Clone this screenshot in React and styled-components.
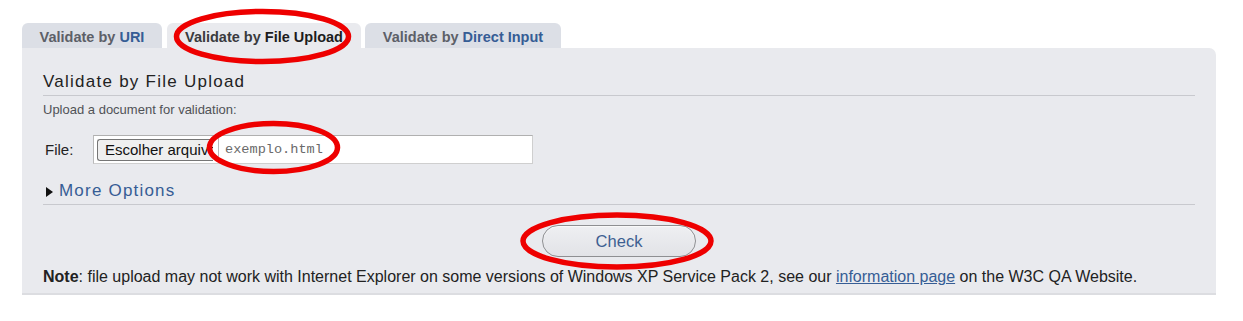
import React from "react";
import styled, { createGlobalStyle } from "styled-components";

const Global = createGlobalStyle`
  html, body { margin: 0; padding: 0; background: #fff; }
  body { font-family: "Liberation Sans", Arial, sans-serif; color: #222; }
`;

const Page = styled.div`
  position: relative;
  width: 1243px;
  height: 321px;
  padding: 23px 27px 0 22px;
  box-sizing: border-box;
`;

const Tabs = styled.div`
  display: flex;
  align-items: flex-end;
  gap: 4px;
`;

const Tab = styled.div`
  height: 25px;
  width: ${(p) => p.$w}px;
  margin-left: ${(p) => p.$ml || 0}px;
  box-sizing: border-box;
  padding-top: 4px;
  line-height: 21px;
  text-align: center;
  white-space: nowrap;
  border-radius: 6px 6px 0 0;
  background: ${(p) => (p.$active ? "#e9eaee" : "#dcdfe6")};
  color: ${(p) => (p.$active ? "#3a3b3e" : "#5d6068")};
  font-size: 14.5px;
  font-weight: bold;
  & b {
    color: ${(p) => (p.$active ? "#1c1c1c" : "#365d95")};
  }
`;

const Panel = styled.div`
  background: #e9eaee;
  border-radius: 0 7px 0 0;
  padding: 24px 21px 7px 21px;
  border-bottom: 2px solid #dcdde1;
`;

const Heading = styled.h2`
  margin: 0;
  font-size: 17px;
  font-weight: normal;
  letter-spacing: 1.25px;
  color: #222;
  line-height: 20px;
  padding-bottom: 3px;
  border-bottom: 1px solid #c8c9ce;
`;

const Hint = styled.p`
  margin: 6px 0 0;
  font-size: 13px;
  color: #505256;
  line-height: 15px;
`;

const FileRow = styled.div`
  display: flex;
  align-items: center;
  margin-top: 18px;
  padding-left: 2px;
  font-size: 15px;
`;

const Label = styled.span`
  width: 48px;
  color: #222;
`;

const FileBox = styled.div`
  width: 440px;
  height: 29px;
  box-sizing: border-box;
  background: #fff;
  border: 1px solid #cfcfcf;
  border-top-color: #b0b0b0;
  border-left-color: #bababa;
  display: flex;
  align-items: center;
  padding-left: 3px;
`;

const ChooseButton = styled.div`
  width: 116px;
  height: 22px;
  box-sizing: border-box;
  background: #efefef;
  border: 1px solid #767676;
  border-right: none;
  border-radius: 3px 0 0 3px;
  font-size: 15px;
  line-height: 20px;
  padding-left: 7px;
  white-space: nowrap;
  overflow: hidden;
  color: #111;
`;

const FileName = styled.div`
  margin-left: 5px;
  height: 25px;
  flex: 1;
  border-left: 1px solid #b8b8b8;
  display: flex;
  align-items: center;
  padding-left: 6px;
  font-family: "Liberation Mono", "Courier New", monospace;
  font-size: 13.6px;
  color: #6a6a6a;
`;

const MoreOptions = styled.div`
  margin-top: 17px;
  padding-left: 3px;
  display: flex;
  align-items: center;
  gap: 6px;
  font-size: 17px;
  letter-spacing: 1.2px;
  color: #365d95;
  line-height: 20px;
  padding-bottom: 3px;
  border-bottom: 1px solid #c8c9ce;
`;

const Arrow = styled.span`
  width: 0;
  height: 0;
  margin-top: 1px;
  border-top: 5.5px solid transparent;
  border-bottom: 5.5px solid transparent;
  border-left: 7px solid #111;
`;

const Actions = styled.div`
  display: flex;
  justify-content: center;
  margin-top: 20px;
`;

const CheckButton = styled.button`
  width: 154px;
  height: 32px;
  border-radius: 16px;
  border: 1px solid #8e8f92;
  background: linear-gradient(#eeeff2, #e2e3e7);
  box-shadow: inset 0 1px 1px #fafafa;
  color: #3d5f92;
  font-family: "Liberation Sans", Arial, sans-serif;
  font-size: 16.5px;
  padding: 0;
`;

const Note = styled.p`
  margin: 11px 0 0;
  font-size: 16px;
  color: #222;
  line-height: 18px;
  & a {
    color: #365d95;
    text-decoration: underline;
  }
`;

const Marks = styled.svg`
  position: absolute;
  left: 0;
  top: 0;
  pointer-events: none;
`;

export default function App() {
  return (
    <>
      <Global />
      <Page>
        <Tabs>
          <Tab $w={140}>
            Validate by <b>URI</b>
          </Tab>
          <Tab $w={194} $ml={1} $active>
            Validate by <b>File Upload</b>
          </Tab>
          <Tab $w={196}>
            Validate by <b>Direct Input</b>
          </Tab>
        </Tabs>
        <Panel>
          <Heading>Validate by File Upload</Heading>
          <Hint>Upload a document for validation:</Hint>
          <FileRow>
            <Label>File:</Label>
            <FileBox>
              <ChooseButton>Escolher arquivo</ChooseButton>
              <FileName>exemplo.html</FileName>
            </FileBox>
          </FileRow>
          <MoreOptions>
            <Arrow />
            More Options
          </MoreOptions>
          <Actions>
            <CheckButton>Check</CheckButton>
          </Actions>
          <Note>
            <b>Note</b>: file upload may not work with Internet Explorer on some
            versions of Windows XP Service Pack 2, see our{" "}
            <a href="#">information page</a> on the W3C QA Website.
          </Note>
        </Panel>
        <Marks width="1243" height="321" viewBox="0 0 1243 321">
          <g fill="none" stroke="#ee0000" strokeWidth="5.5">
            <ellipse cx="262.5" cy="36.5" rx="86" ry="25" />
            <ellipse cx="273.5" cy="147.5" rx="64" ry="24" />
            <ellipse cx="617" cy="241" rx="94" ry="26" />
          </g>
        </Marks>
      </Page>
    </>
  );
}
